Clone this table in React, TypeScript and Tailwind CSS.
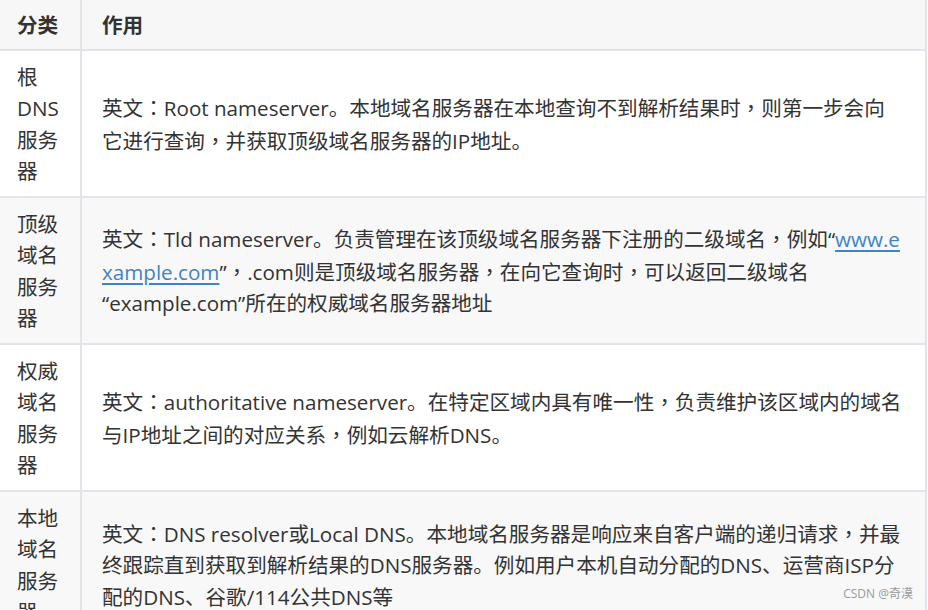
import { ReactNode } from 'react';

interface Row {
    name: ReactNode;
    desc: ReactNode;
}

// full-width comma and colon sit centred in the reference, so give them the TC glyphs
function t(s: string) {
    return s.split(/([，：])/).map((part, i) =>
        part === '，' || part === '：' ? (
            <span key={i} style={{ fontFamily: '"Noto Sans CJK TC", sans-serif' }}>
                {part}
            </span>
        ) : (
            part
        ),
    );
}

const rows: Row[] = [
    {
        name: (
            <>
                根<br />DNS<br />服务<br />器
            </>
        ),
        desc: (
            <>
                {t('英文：Root nameserver。本地域名服务器在本地查询不到解析结果时，则第一步会向')}
                <br />
                {t('它进行查询，并获取顶级域名服务器的IP地址。')}
            </>
        ),
    },
    {
        name: (
            <>
                顶级<br />域名<br />服务<br />器
            </>
        ),
        desc: (
            <>
                {t('英文：Tld nameserver。负责管理在该顶级域名服务器下注册的二级域名，例如“')}
                <a href="#" className="text-[#4183c4] underline underline-offset-[3px]">
                    www.e
                    <br />
                    xample.com
                </a>
                {t('”，.com则是顶级域名服务器，在向它查询时，可以返回二级域名')}
                <br />
                “example.com”所在的权威域名服务器地址
            </>
        ),
    },
    {
        name: (
            <>
                权威<br />域名<br />服务<br />器
            </>
        ),
        desc: (
            <>
                {t('英文：authoritative nameserver。在特定区域内具有唯一性，负责维护该区域内的域名')}
                <br />
                {t('与IP地址之间的对应关系，例如云解析DNS。')}
            </>
        ),
    },
    {
        name: (
            <>
                本地<br />域名<br />服务<br />器
            </>
        ),
        desc: (
            <>
                {t('英文：DNS resolver或Local DNS。本地域名服务器是响应来自客户端的递归请求，并最')}
                <br />
                终跟踪直到获取到解析结果的DNS服务器。例如用户本机自动分配的DNS、运营商ISP分
                <br />
                配的DNS、谷歌/114公共DNS等
            </>
        ),
    },
];

export default function App() {
    return (
        <div
            className="relative h-[610px] w-[928px] overflow-hidden bg-white text-[20.6px] leading-[31.5px] text-[#333]"
            style={{ fontFamily: '"Open Sans", "Noto Sans CJK SC", sans-serif' }}
        >
            <div className="-ml-[2px] -mt-[2px] w-[929px] border-2 border-[#e1e4e8]">
                {/* Header */}
                <div className="flex h-[49px] bg-[#f7f7f7] font-bold">
                    <div className="flex w-[82px] shrink-0 items-center border-r-2 border-[#e1e4e8] pl-[17px] pt-[3px]">分类</div>
                    <div className="flex flex-1 items-center pl-[20px] pt-[3px]">作用</div>
                </div>

                {rows.map((row, i) => (
                    <div
                        key={i}
                        className={`flex border-t-2 border-[#e1e4e8] ${i % 2 === 1 ? 'bg-[#f8f8f8]' : 'bg-white'}`}
                    >
                        <div className="w-[82px] shrink-0 border-r-2 border-[#e1e4e8] pb-[8.5px] pl-[17px] pt-[10.5px]">
                            {row.name}
                        </div>
                        <div className="flex flex-1 items-center whitespace-nowrap pb-[8.5px] pl-[20px] pt-[10.5px]">
                            <p>{row.desc}</p>
                        </div>
                    </div>
                ))}
            </div>

            <div className="absolute bottom-[8px] right-[15px] text-[12px] leading-[16px] text-[#999]">
                CSDN @奇漠
            </div>
        </div>
    );
}
